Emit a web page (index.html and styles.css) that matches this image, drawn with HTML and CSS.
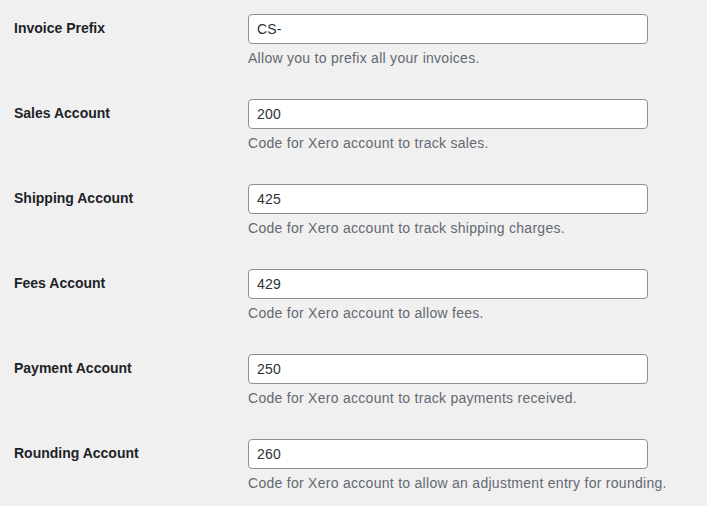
FILE: index.html
```html
<!DOCTYPE html>
<html lang="en">
  <head>
    <meta charset="UTF-8" />
    <title>Xero Settings</title>
    <link rel="stylesheet" href="styles.css">
  </head>
  <body>
    <table class="form-table">
      <tbody>
        <tr>
          <th><label for="invoice_prefix">Invoice Prefix</label></th>
          <td>
            <input type="text" id="invoice_prefix" class="regular-text" value="CS-" />
            <p class="description">Allow you to prefix all your invoices.</p>
          </td>
        </tr>
        <tr>
          <th><label for="sales_account">Sales Account</label></th>
          <td>
            <input type="text" id="sales_account" class="regular-text" value="200" />
            <p class="description">Code for Xero account to track sales.</p>
          </td>
        </tr>
        <tr>
          <th><label for="shipping_account">Shipping Account</label></th>
          <td>
            <input type="text" id="shipping_account" class="regular-text" value="425" />
            <p class="description">Code for Xero account to track shipping charges.</p>
          </td>
        </tr>
        <tr>
          <th><label for="fees_account">Fees Account</label></th>
          <td>
            <input type="text" id="fees_account" class="regular-text" value="429" />
            <p class="description">Code for Xero account to allow fees.</p>
          </td>
        </tr>
        <tr>
          <th><label for="payment_account">Payment Account</label></th>
          <td>
            <input type="text" id="payment_account" class="regular-text" value="250" />
            <p class="description">Code for Xero account to track payments received.</p>
          </td>
        </tr>
        <tr>
          <th><label for="rounding_account">Rounding Account</label></th>
          <td>
            <input type="text" id="rounding_account" class="regular-text" value="260" />
            <p class="description">Code for Xero account to allow an adjustment entry for rounding.</p>
          </td>
        </tr>
      </tbody>
    </table>
  </body>
</html>
```

FILE: styles.css
```css
html,
body {
  height: 100%;
}
body {
  margin: 0;
  padding: 0 14px;
  background: #f0f0f1;
  color: #3c434a;
  font-family: "Liberation Sans", Arial, sans-serif;
  font-size: 14px;
  line-height: 1.4;
}

.form-table {
  border-collapse: collapse;
  margin-top: -1px;
  width: 100%;
}
.form-table th {
  width: 224px;
  padding: 20px 10px 20px 0;
  vertical-align: top;
  text-align: left;
  line-height: 1.3;
  font-weight: 600;
  color: #1d2327;
}
.form-table td {
  padding: 15px 0;
  vertical-align: top;
  line-height: 1.3;
}

.regular-text {
  box-sizing: border-box;
  width: 400px;
  min-height: 30px;
  margin: 0;
  padding: 0 8px;
  border: 1px solid #8c8f94;
  border-radius: 4px;
  background: #fff;
  color: #2c3338;
  font-family: inherit;
  font-size: 14px;
  line-height: 2;
  letter-spacing: 0.2px;
}

.description {
  margin: 4px 0 0;
  color: #646970;
  font-size: 14px;
  line-height: 1.5;
  letter-spacing: 0.28px;
}
```
